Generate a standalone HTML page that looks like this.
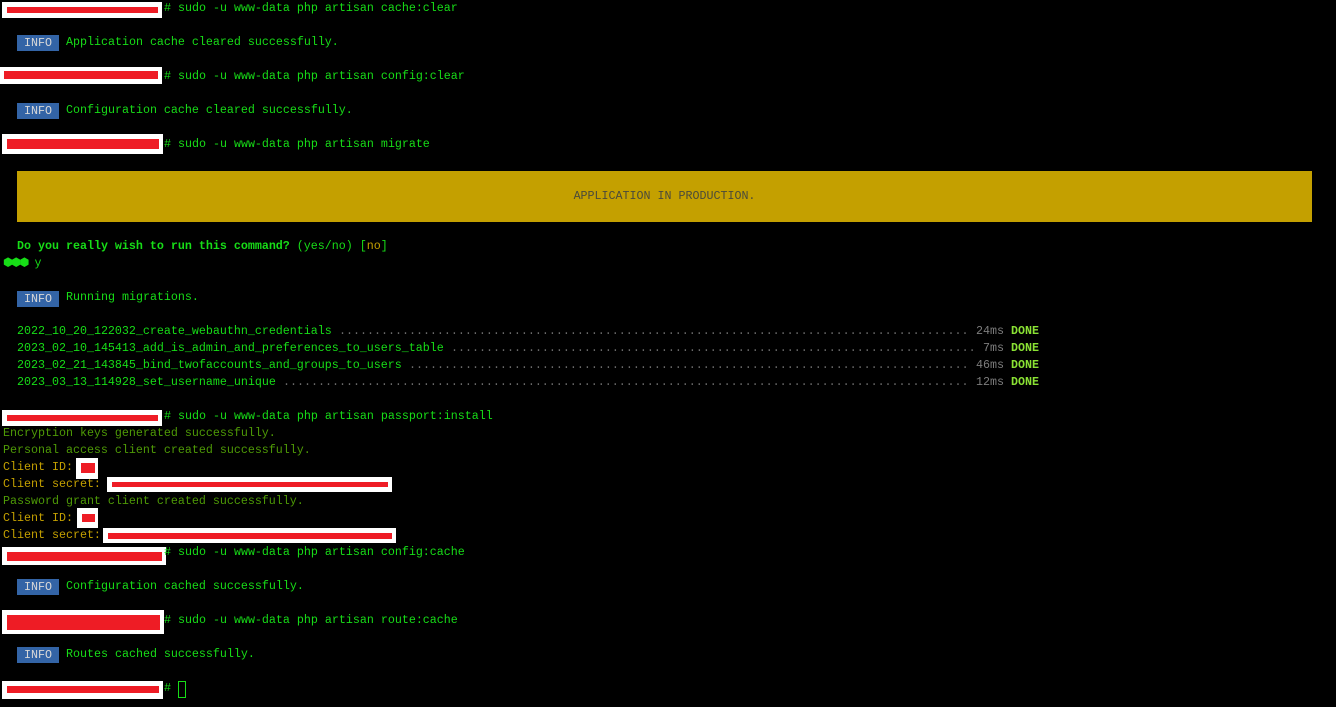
<!DOCTYPE html>
<html><head><meta charset="utf-8"><style>
html,body{margin:0;padding:0;background:#000;width:1336px;height:707px;overflow:hidden}
body{position:relative;font-family:"Liberation Mono","DejaVu Sans Mono",monospace;font-size:11.67px;color:#17dd17}
.l{position:absolute;left:3px;height:17px;line-height:17px;white-space:pre}
.w{position:absolute;background:#fff}
.r{position:absolute;background:#ee1c25}
.info{position:absolute;left:17px;width:42px;height:16px;background:#3364a6;color:#d8d8d8;line-height:16px;text-align:center}
.dk{color:#4e9a06}
.or{color:#c4a000}
.gr{color:#7d7d7d}
.dn{color:#8ae234;font-weight:bold}
.dots{position:absolute;overflow:hidden;white-space:pre;color:#6a6a6a;height:17px;line-height:17px}
</style></head><body>

<!-- redactions -->
<div class="w" style="left:2px;top:2px;width:160px;height:16px"></div><div class="r" style="left:7px;top:7px;width:151px;height:6px"></div>
<div class="w" style="left:0px;top:67px;width:162px;height:17px"></div><div class="r" style="left:4px;top:71px;width:154px;height:8px"></div>
<div class="w" style="left:2px;top:134px;width:161px;height:20px"></div><div class="r" style="left:7px;top:139px;width:152px;height:10px"></div>
<div class="w" style="left:2px;top:410px;width:160px;height:16px"></div><div class="r" style="left:7px;top:415px;width:151px;height:6px"></div>
<div class="w" style="left:76px;top:458px;width:22px;height:21px"></div><div class="r" style="left:81px;top:463px;width:14px;height:10px"></div>
<div class="w" style="left:107px;top:477px;width:285px;height:15px"></div><div class="r" style="left:112px;top:482px;width:276px;height:5px"></div>
<div class="w" style="left:77px;top:508px;width:21px;height:20px"></div><div class="r" style="left:82px;top:514px;width:13px;height:8px"></div>
<div class="w" style="left:103px;top:528px;width:293px;height:15px"></div><div class="r" style="left:108px;top:533px;width:284px;height:6px"></div>
<div class="w" style="left:2px;top:547px;width:164px;height:18px"></div><div class="r" style="left:7px;top:552px;width:155px;height:9px"></div>
<div class="w" style="left:2px;top:610px;width:162px;height:24px"></div><div class="r" style="left:7px;top:615px;width:153px;height:15px"></div>
<div class="w" style="left:2px;top:681px;width:161px;height:18px"></div><div class="r" style="left:7px;top:686px;width:152px;height:7px"></div>

<div class="l" style="left:164px;top:0px"># sudo -u www-data php artisan cache:clear</div>
<div class="info" style="top:35px">INFO</div><div class="l" style="left:66px;top:34px">Application cache cleared successfully.</div>
<div class="l" style="left:164px;top:68px"># sudo -u www-data php artisan config:clear</div>
<div class="info" style="top:103px">INFO</div><div class="l" style="left:66px;top:102px">Configuration cache cleared successfully.</div>
<div class="l" style="left:164px;top:136px"># sudo -u www-data php artisan migrate</div>

<div style="position:absolute;left:17px;top:171px;width:1295px;height:51px;background:#c4a000;color:#4a4a3a;text-align:center;line-height:51px">APPLICATION IN PRODUCTION.</div>

<div class="l" style="left:17px;top:238px;font-weight:bold">Do you really wish to run this command? <span style="font-weight:normal">(yes/no) [<span class="or">no</span>]</span></div>
<div class="l" style="top:255px;left:3px"><span style="letter-spacing:-2px">⬢⬢⬢</span> y</div>

<div class="info" style="top:291px">INFO</div><div class="l" style="left:66px;top:289px">Running migrations.</div>

<div class="l" style="left:17px;top:323px">2022_10_20_122032_create_webauthn_credentials</div>
<div class="dots" style="left:339px;top:323px;width:630px">..........................................................................................................</div>
<div class="l gr" style="left:976px;top:323px">24ms <span class="dn">DONE</span></div>
<div class="l" style="left:17px;top:340px">2023_02_10_145413_add_is_admin_and_preferences_to_users_table</div>
<div class="dots" style="left:451px;top:340px;width:525px">..........................................................................................................</div>
<div class="l gr" style="left:983px;top:340px">7ms <span class="dn">DONE</span></div>
<div class="l" style="left:17px;top:357px">2023_02_21_143845_bind_twofaccounts_and_groups_to_users</div>
<div class="dots" style="left:409px;top:357px;width:560px">..........................................................................................................</div>
<div class="l gr" style="left:976px;top:357px">46ms <span class="dn">DONE</span></div>
<div class="l" style="left:17px;top:374px">2023_03_13_114928_set_username_unique</div>
<div class="dots" style="left:283px;top:374px;width:686px">..........................................................................................................</div>
<div class="l gr" style="left:976px;top:374px">12ms <span class="dn">DONE</span></div>

<div class="l" style="left:164px;top:408px"># sudo -u www-data php artisan passport:install</div>
<div class="l dk" style="top:425px">Encryption keys generated successfully.</div>
<div class="l dk" style="top:442px">Personal access client created successfully.</div>
<div class="l or" style="top:459px">Client ID:</div>
<div class="l or" style="top:476px">Client secret:</div>
<div class="l dk" style="top:493px">Password grant client created successfully.</div>
<div class="l or" style="top:510px">Client ID:</div>
<div class="l or" style="top:527px">Client secret:</div>
<div class="l" style="left:164px;top:544px"># sudo -u www-data php artisan config:cache</div>
<div class="info" style="top:579px">INFO</div><div class="l" style="left:66px;top:578px">Configuration cached successfully.</div>
<div class="l" style="left:164px;top:612px"># sudo -u www-data php artisan route:cache</div>
<div class="info" style="top:647px">INFO</div><div class="l" style="left:66px;top:646px">Routes cached successfully.</div>
<div class="l" style="left:164px;top:680px">#</div>
<div style="position:absolute;left:178px;top:681px;width:6px;height:15px;border:1px solid #17dd17"></div>
</body></html>
